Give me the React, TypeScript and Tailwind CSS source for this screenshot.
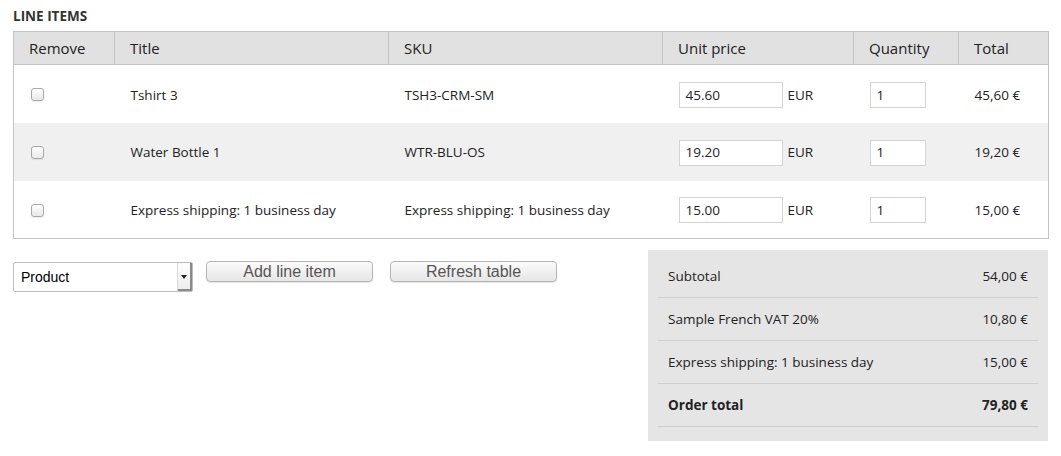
import React from 'react';

const rows = [
  { title: 'Tshirt 3', sku: 'TSH3-CRM-SM', price: '45.60', qty: '1', total: '45,60 €' },
  { title: 'Water Bottle 1', sku: 'WTR-BLU-OS', price: '19.20', qty: '1', total: '19,20 €' },
  { title: 'Express shipping: 1 business day', sku: 'Express shipping: 1 business day', price: '15.00', qty: '1', total: '15,00 €' },
];

const totals = [
  { label: 'Subtotal', value: '54,00 €' },
  { label: 'Sample French VAT 20%', value: '10,80 €' },
  { label: 'Express shipping: 1 business day', value: '15,00 €' },
  { label: 'Order total', value: '79,80 €', bold: true },
];

function Checkbox() {
  return (
    <span className="block w-[13px] h-[13px] rounded-[3px] border border-[#a8a8a8] bg-gradient-to-b from-white to-[#e8e8e8] shadow-[0_1px_1px_rgba(0,0,0,0.08)]" />
  );
}

export default function App() {
  return (
    <div className="w-[1061px] h-[456px] bg-white px-[13px] pt-[8px] text-[#222] font-['Open_Sans',sans-serif]">
      <h2 className="text-[13.5px] leading-[16px] font-bold text-[#333] mb-[7px]">LINE ITEMS</h2>

      <table className="w-[1035px] table-fixed border-collapse border border-[#c4c4c4] text-[13.5px]">
        <colgroup>
          <col className="w-[101px]" />
          <col className="w-[274px]" />
          <col className="w-[274px]" />
          <col className="w-[191px]" />
          <col className="w-[105px]" />
          <col className="w-[90px]" />
        </colgroup>
        <thead>
          <tr className="bg-[#e1e1e1] h-[33px] border-b border-[#c4c4c4]">
            <th className="text-left font-normal text-[15px] pl-[15px]">Remove</th>
            <th className="text-left font-normal text-[15px] pl-[15px] border-l border-[#c4c4c4]">Title</th>
            <th className="text-left font-normal text-[15px] pl-[15px] border-l border-[#c4c4c4]">SKU</th>
            <th className="text-left font-normal text-[15px] pl-[15px] border-l border-[#c4c4c4]">Unit price</th>
            <th className="text-left font-normal text-[15px] pl-[15px] border-l border-[#c4c4c4]">Quantity</th>
            <th className="text-left font-normal text-[15px] pl-[15px] border-l border-[#c4c4c4]">Total</th>
          </tr>
        </thead>
        <tbody>
          {rows.map((r, i) => (
            <tr key={i} className={`h-[58px] ${i === 1 ? 'bg-[#f0f0f0]' : 'bg-white'}`}>
              <td className="pl-[17px] pt-[2px]">
                <Checkbox />
              </td>
              <td className="pl-[16px] pt-[2px] whitespace-nowrap">{r.title}</td>
              <td className="pl-[16px] pt-[2px] whitespace-nowrap">{r.sku}</td>
              <td className="pl-[16px] pt-[2px]">
                <div className="flex items-center gap-[5px]">
                  <div className="w-[104px] h-[26px] border border-[#d4d4d4] bg-white px-[6px] flex items-center">{r.price}</div>
                  <span>EUR</span>
                </div>
              </td>
              <td className="pl-[16px] pt-[2px]">
                <div className="w-[56px] h-[26px] border border-[#d4d4d4] bg-white px-[6px] flex items-center">{r.qty}</div>
              </td>
              <td className="pl-[16px] pt-[2px] whitespace-nowrap">{r.total}</td>
            </tr>
          ))}
        </tbody>
      </table>

      <div className="flex justify-between mt-[11px]">
        <div className="flex items-start pt-[12px]">
          <div className="relative w-[180px] h-[30px] border border-[#bdbdbd] rounded-[2px] bg-white flex items-center pl-[7px] text-[14px] text-black font-['Liberation_Sans',sans-serif]">
            Product
            <div className="absolute right-0 top-0 h-full w-[15px] border-l border-[#d8d8d8] bg-gradient-to-b from-white to-[#ececec] shadow-[inset_-2px_-2px_0_#8a8a8a] flex items-center justify-center">
              <span className="block w-0 h-0 border-l-[3px] border-r-[3px] border-t-[4px] border-l-transparent border-r-transparent border-t-[#222] -translate-x-[1px]" />
            </div>
          </div>
          <button className="ml-[13px] -mt-[1px] w-[167px] h-[21px] rounded-[4px] border border-[#b4b4b4] bg-gradient-to-b from-[#fbfbfb] to-[#e6e6e6] shadow-[0_1px_1px_rgba(0,0,0,0.1)] text-[16px] leading-[19px] text-[#555] font-['Liberation_Sans',sans-serif]">
            Add line item
          </button>
          <button className="ml-[17px] -mt-[1px] w-[167px] h-[21px] rounded-[4px] border border-[#b4b4b4] bg-gradient-to-b from-[#fbfbfb] to-[#e6e6e6] shadow-[0_1px_1px_rgba(0,0,0,0.1)] text-[16px] leading-[19px] text-[#555] font-['Liberation_Sans',sans-serif]">
            Refresh table
          </button>
        </div>

        <div className="w-[400px] bg-[#e5e5e5] px-[10px] pt-[5px] pb-[14px] text-[13.5px]">
          {totals.map((t, i) => (
            <div key={i} className={`h-[43px] border-b border-[#cfcfcf] flex items-center justify-between px-[10px] ${t.bold ? 'font-bold' : ''}`}>
              <span>{t.label}</span>
              <span>{t.value}</span>
            </div>
          ))}
        </div>
      </div>
    </div>
  );
}
